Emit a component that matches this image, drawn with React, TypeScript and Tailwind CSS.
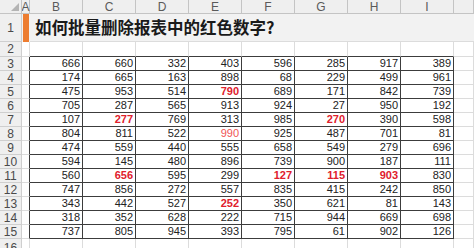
const cols = ["A", "B", "C", "D", "E", "F", "G", "H", "I", ""];

// "*" = red bold, "~" = light red
const rows = [
  "666 660 332 403 596 285 917 389",
  "174 665 163 898 68 229 499 961",
  "475 953 514 790* 689 171 842 739",
  "705 287 565 913 924 27 950 192",
  "107 277* 769 313 985 270* 390 598",
  "804 811 522 990~ 925 487 701 81",
  "474 559 440 555 658 549 279 696",
  "594 145 480 896 739 900 187 111",
  "560 656* 595 299 127* 115* 903* 830",
  "747 856 272 557 835 415 242 850",
  "343 442 527 252* 350 621 81 143",
  "318 352 628 222 715 944 669 698",
  "737 805 945 393 795 61 902 126",
];

const rowHdr =
  "bg-[#efefef] border-r border-b border-[#cfcfcf] text-[#4a4a4a] text-[12px] flex items-center justify-center";
const grid = "border-r border-b border-[#dcdcdc]";

function NumCell({ v }: { v: string }) {
  const bold = v.endsWith("*");
  const light = v.endsWith("~");
  const n = v.replace(/[*~]/, "");
  return (
    <div
      className={
        "border-r border-b border-[#3c3c3c] flex items-center justify-end pr-[2px] text-[11px] leading-none " +
        (bold ? "text-[#e0202c] font-bold" : light ? "text-[#f05454]" : "text-[#222]")
      }
    >
      {n}
    </div>
  );
}

export default function App() {
  return (
    <div
      className="w-[474px] h-[248px] overflow-hidden bg-white grid grid-cols-[22px_8px_repeat(8,53px)_1fr] grid-rows-[14px_28px_15px_repeat(13,14px)_1fr]"
      style={{ fontFamily: '"Liberation Sans", Arial, sans-serif' }}
    >
      {/* column headers */}
      <div className="relative bg-[#efefef] border-r border-b border-[#c4c4c4]">
        <svg className="absolute right-[2px] bottom-[2px]" width="8" height="8" viewBox="0 0 8 8">
          <path d="M8 0 L8 8 L0 8 Z" fill="#b4b4b4" />
        </svg>
      </div>
      {cols.map((c, i) => (
        <div
          key={"h" + i}
          className="bg-[#efefef] border-r border-b border-[#c4c4c4] text-[#5a5a5a] text-[12px] flex items-center justify-center"
        >
          {c}
        </div>
      ))}

      {/* row 1 */}
      <div className={rowHdr}>1</div>
      <div className="bg-[#f2f2f2] pl-px">
        <div className="h-full w-[6px] bg-[#ed7d31]" />
      </div>
      <div className="col-span-9 bg-[#f2f2f2] flex items-center pl-[5px] border-b border-[#dcdcdc]">
        <span
          className="text-[16.5px] font-bold text-[#1a1a1a] leading-none"
          style={{ fontFamily: '"Noto Sans CJK SC", "Noto Sans", sans-serif' }}
        >
          如何批量删除报表中的红色数字?
        </span>
      </div>

      {/* row 2 */}
      <div className={rowHdr}>2</div>
      <div className={grid} />
      {Array.from({ length: 8 }).map((_, i) => (
        <div key={"r2" + i} className="border-r border-b border-r-[#dcdcdc] border-b-[#3c3c3c]" />
      ))}
      <div className={grid} />

      {/* data rows */}
      {rows.map((r, ri) => [
        <div key={"rh" + ri} className={rowHdr}>
          {ri + 3}
        </div>,
        <div key={"ra" + ri} className="border-r border-b border-r-[#3c3c3c] border-b-[#dcdcdc]" />,
        ...r.split(" ").map((v, ci) => <NumCell key={ri + "-" + ci} v={v} />),
        <div key={"rx" + ri} className={grid} />,
      ])}

      {/* row 16 */}
      <div className={rowHdr}>16</div>
      {cols.map((_, i) => (
        <div key={"r16" + i} className={grid} />
      ))}
    </div>
  );
}
